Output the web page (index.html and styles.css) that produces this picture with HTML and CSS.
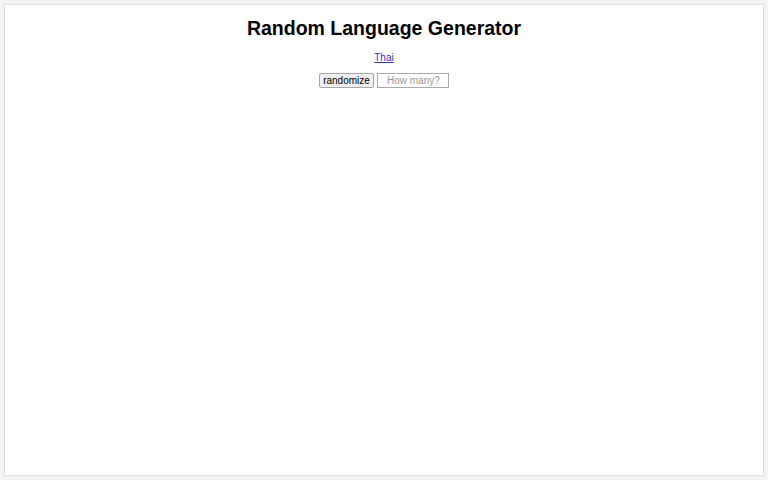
FILE: index.html
```html
<!DOCTYPE html>
<html>
<head>
<meta charset="utf-8">
<link rel="stylesheet" href="styles.css">
</head>
<body>
<main class="sheet">
  <h1 class="title">Random Language Generator</h1>
  <p class="lang"><a href="#">Thai</a></p>
  <div class="controls">
    <button class="btn">randomize</button>
    <input class="count" type="text" placeholder="How many?">
  </div>
</main>
</body>
</html>
```
FILE: styles.css
```css
html, body {
  margin: 0;
  height: 100%;
}
body {
  background: #f3f3f3;
  padding: 4px;
  box-sizing: border-box;
  font-family: "Liberation Sans", Arial, sans-serif;
}
.sheet {
  background: #fff;
  border: 1px solid #dcdcdc;
  height: 100%;
  box-sizing: border-box;
  text-align: center;
  padding-top: 11px;
}
.title {
  margin: 0;
  font-size: 19.5px;
  line-height: 24px;
  font-weight: bold;
  color: #000;
}
.lang {
  margin: 12px 0 0;
  font-size: 10px;
  line-height: 12px;
}
.lang a {
  color: #3333bb;
}
.controls {
  margin-top: 9px;
  display: flex;
  justify-content: center;
  gap: 3px;
}
.btn {
  font-family: "Liberation Sans", Arial, sans-serif;
  font-size: 10px;
  height: 15px;
  width: 55px;
  padding: 0;
  background: #efefef;
  border: 1px solid #a8a8a8;
  border-radius: 2px;
  color: #000;
}
.count {
  font-family: "Liberation Sans", Arial, sans-serif;
  font-size: 10px;
  width: 72px;
  height: 15px;
  box-sizing: border-box;
  border: 1px solid #aaa;
  padding: 0 0 0 9px;
}
.count::placeholder {
  color: #999;
}
```
